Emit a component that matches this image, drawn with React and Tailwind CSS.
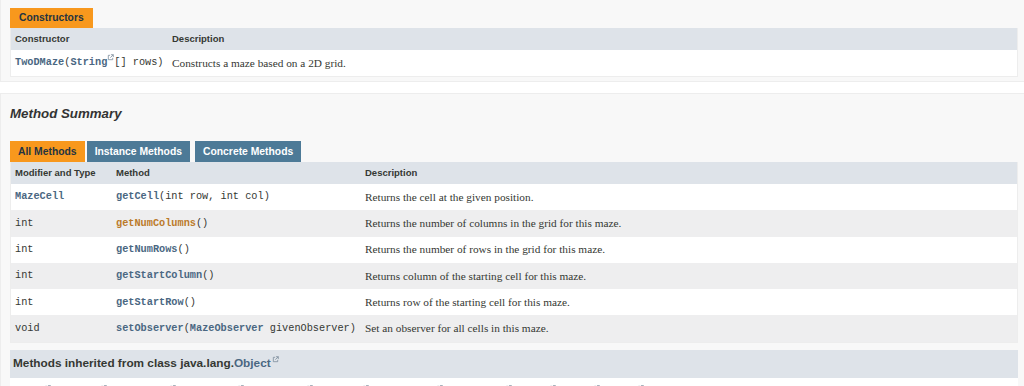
const sans = "font-['Liberation_Sans',Arial,sans-serif]";
const mono = "font-['Liberation_Mono','Courier_New',monospace]";
const serif = "font-['Liberation_Serif','Times_New_Roman',serif]";

function ExtIcon({ className = '' }) {
  return (
    <svg className={`inline-block align-top ${className}`} width="7" height="7" viewBox="0 0 8 8" fill="none" stroke="currentColor" strokeWidth="0.9">
      <path d="M3.5 1.5H1.5v5h5v-2" />
      <path d="M4.5 0.8h2.7v2.7M7.2 0.8L3.8 4.2" />
    </svg>
  );
}

const methods = [
  { type: 'MazeCell', typeLink: true, name: 'getCell', args: '(int row, int col)', desc: 'Returns the cell at the given position.' },
  { type: 'int', name: 'getNumColumns', args: '()', desc: 'Returns the number of columns in the grid for this maze.', hover: true },
  { type: 'int', name: 'getNumRows', args: '()', desc: 'Returns the number of rows in the grid for this maze.' },
  { type: 'int', name: 'getStartColumn', args: '()', desc: 'Returns column of the starting cell for this maze.' },
  { type: 'int', name: 'getStartRow', args: '()', desc: 'Returns row of the starting cell for this maze.' },
  { type: 'void', name: 'setObserver', observer: true, desc: 'Set an observer for all cells in this maze.' },
];

const inherited = ['clone', 'equals', 'finalize', 'getClass', 'hashCode', 'notify', 'notifyAll', 'toString', 'wait', 'wait', 'wait'];

function Tab({ children, active }) {
  return (
    <div
      className={`h-[21px] px-[8px] flex items-center text-[10.35px] font-bold ${sans} ${
        active ? 'bg-[#f8981d] text-[#253441]' : 'bg-[#4d7a97] text-white'
      }`}
    >
      {children}
    </div>
  );
}

export default function App() {
  return (
    <div className="w-[1024px] h-[386px] overflow-hidden bg-white text-[#353833]">
      {/* Constructor summary */}
      <section className="bg-[#f8f8f8] border-l border-b border-[#ededed] pt-2 pl-[9px] pr-[6px] pb-[4px]">
        <div className="flex">
          <div className={`h-5 px-[9px] flex items-center bg-[#f8981d] text-[#253441] text-[10.3px] font-bold ${sans}`}>
            Constructors
          </div>
        </div>
        <div className="border border-t-0 border-[#ededed]">
          <div className={`grid grid-cols-[156px_1fr] h-[22px] items-center bg-[#dee3e9] text-[9.5px] font-bold ${sans}`}>
            <div className="pl-[4px]">Constructor</div>
            <div className="pl-[5px]">Description</div>
          </div>
          <div className="grid grid-cols-[156px_1fr] h-[26px] items-center bg-white">
            <div className={`pl-[4px] text-[10.25px] whitespace-nowrap ${mono}`}>
              <span className="font-bold text-[#4a6782]">TwoDMaze</span>(<span className="font-bold text-[#4a6782]">String</span>
              <ExtIcon className="text-[#7a8b9a] -mt-[1px]" />[] rows)
            </div>
            <div className={`pl-[5px] text-[11.3px] ${serif}`}>Constructs a maze based on a 2D grid.</div>
          </div>
        </div>
      </section>

      <div className="h-[11px]" />

      {/* Method summary */}
      <section className="bg-[#f8f8f8] border-l border-t border-[#ededed] pl-[9px] pr-[6px]">
        <div className="h-[47px] pt-[11px]">
          <h2 className={`text-[13.3px] leading-[18px] font-bold italic text-[#333] ${sans}`}>Method Summary</h2>
        </div>
        <div className="flex gap-[2px]">
          <Tab active>All Methods</Tab>
          <Tab>Instance Methods</Tab>
          <div className="w-px" />
          <Tab>Concrete Methods</Tab>
        </div>
        <div className="border border-t-0 border-[#ededed]">
          <div className={`grid grid-cols-[101px_249px_1fr] h-[22px] items-center bg-[#dee3e9] text-[9.5px] font-bold ${sans}`}>
            <div className="pl-[4px]">Modifier and Type</div>
            <div className="pl-[4px]">Method</div>
            <div className="pl-[4px]">Description</div>
          </div>
          {methods.map((m, i) => (
            <div
              key={m.name}
              className={`grid grid-cols-[101px_249px_1fr] h-[26.3px] items-center ${i % 2 ? 'bg-[#eeeeef]' : 'bg-white'}`}
            >
              <div className={`pl-[4px] text-[10.25px] ${mono} ${m.typeLink ? 'font-bold text-[#4a6782]' : ''}`}>{m.type}</div>
              <div className={`pl-[4px] text-[10.25px] whitespace-nowrap ${mono}`}>
                <span className={`font-bold ${m.hover ? 'text-[#bb7a2a]' : 'text-[#4a6782]'}`}>{m.name}</span>
                {m.observer ? (
                  <>
                    (<span className="font-bold text-[#4a6782]">MazeObserver</span> givenObserver)
                  </>
                ) : (
                  m.args
                )}
              </div>
              <div className={`pl-[4px] text-[11.3px] ${serif}`}>{m.desc}</div>
            </div>
          ))}
        </div>
        <div className="h-[7px]" />
        <div className={`h-[28px] flex items-center pl-[3px] bg-[#dee3e9] text-[11.8px] font-bold ${sans}`}>
          Methods inherited from class java.lang.
          <span className="text-[#4a6782]">Object</span>
          <ExtIcon className="text-[#7a8b9a] ml-[1px] -mt-[8px]" />
        </div>
        <div className={`bg-white pl-[3px] pt-[8px] h-[40px] text-[10.25px] whitespace-nowrap ${mono}`}>
          {inherited.map((n, i) => (
            <span key={i}>
              <span className="font-bold text-[#4a6782]">{n}</span>
              <ExtIcon className="text-[#7a8b9a] -mt-[1px]" />
              {i < inherited.length - 1 ? ', ' : ''}
            </span>
          ))}
        </div>
      </section>
    </div>
  );
}
